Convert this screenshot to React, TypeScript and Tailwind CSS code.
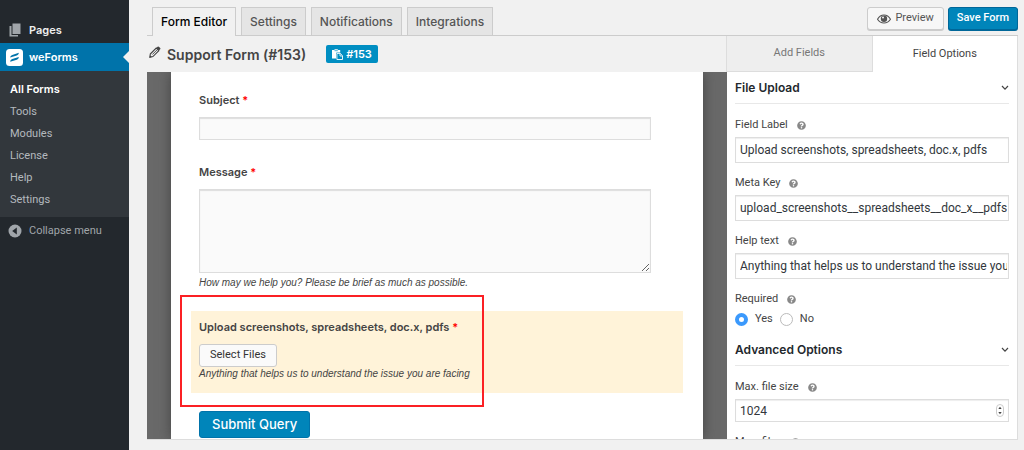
import { ReactNode, useState } from "react";
import { FaQuestionCircle } from "react-icons/fa";

const submenu = ["All Forms", "Tools", "Modules", "License", "Help", "Settings"];
const tabs = ["Form Editor", "Settings", "Notifications", "Integrations"];

function PagesIcon() {
    return (
        <svg viewBox="0 0 12 14" className="h-[14px] w-3 fill-[#a0a5aa]">
            <path d="M3.5 0.5H11.5V11H3.5z" />
            <path d="M0.5 3H2.5V12H9V13.5H0.5z" />
        </svg>
    )
}

function LogoIcon() {
    return (
        <svg viewBox="0 0 17 17" className="size-[17px]">
            <rect width="17" height="17" rx="3.5" fill="#fff" />
            <path d="M4.2 8.600C4.300 7.200 5 6.300 6.300 5.900L12.800 3.800C12.700 5.200 12 6.100 10.800 6.500zM4.200 12.800C4.300 11.400 5 10.500 6.300 10.100L12.800 8C12.700 9.400 12 10.300 10.800 10.700z" fill="#0073aa" />
        </svg>
    )
}

function CollapseIcon() {
    return (
        <svg viewBox="0 0 14 14" className="size-[14px]">
            <circle cx="7" cy="7" r="6.500" fill="#a0a5aa" />
            <path d="M8.800 3.600V10.400L4.200 7z" fill="#23282d" />
        </svg>
    )
}

function PencilIcon() {
    return (
        <svg viewBox="0 0 12 12" className="mb-1 size-3" fill="none" stroke="#444">
            <path d="M1.300 8L7.200 2.100L9.800 4.700L3.900 10.600L0.900 11.200z" strokeWidth="1.100" />
            <path d="M3.400 8.500L8 3.900" strokeWidth="0.900" />
            <path d="M0.500 11.600L1 9.200L2.800 11z" fill="#444" stroke="none" />
            <path d="M7.300 2L8.600 0.700Q9.200 0.200 9.800 0.700L11.200 2.100Q11.800 2.700 11.200 3.300L9.900 4.600z" fill="#444" stroke="none" />
        </svg>
    )
}

function PasteIcon() {
    return (
        <svg viewBox="0 0 11 11" className="size-[11px]">
            <path d="M0 1H2.500V0.300H5.800V1H8.200V3.500H5Q4 3.500 4 4.500V9.500H0z" fill="#fff" />
            <path d="M2.500 1.700H5.800" stroke="#008ec2" strokeWidth="0.700" />
            <path d="M4.900 4.400H8.200L10.500 6.700V10.500H4.900z" fill="none" stroke="#fff" strokeWidth="0.900" />
            <path d="M8 4.400V7H10.500" fill="none" stroke="#fff" strokeWidth="0.800" />
        </svg>
    )
}

function EyeIcon() {
    return (
        <svg viewBox="0 0 14 10" className="h-[10px] w-[14px]">
            <path d="M0.500 5.200Q3 1 7 1T13.500 5.200Q11 9 7 9T0.500 5.200z" fill="none" stroke="#555" strokeWidth="1.100" />
            <circle cx="7" cy="4.700" r="3.200" fill="#555" />
            <circle cx="6" cy="3.600" r="1" fill="#f7f7f7" />
        </svg>
    )
}

function ChevronIcon() {
    return (
        <svg viewBox="0 0 8 6" className="h-[6px] w-2" fill="none" stroke="#444" strokeWidth="1.200">
            <path d="M1 1L4 4.200L7 1" />
        </svg>
    )
}

function Sidebar() {
    return (
        <nav className="flex w-[129px] shrink-0 flex-col bg-[#23282d] pt-[17px] text-[#b4b9be]">
            <a href="#pages" className="flex h-[26px] items-center font-['Inter'] text-[11px] font-semibold text-[#eee]">
                <span className="flex w-[29px] justify-center">
                    <PagesIcon />
                </span>
                Pages
            </a>
            <a href="#weforms" className="relative flex h-7 items-center bg-[#0073aa] font-['Inter'] text-[11px] font-semibold text-white">
                <span className="flex w-[29px] justify-center">
                    <LogoIcon />
                </span>
                weForms
                <span className="absolute right-0 top-2 border-y-6 border-r-6 border-y-transparent border-r-[#f1f1f1]" />
            </a>
            <ul className="bg-[#32373c] pt-[6px] pb-[6px] pl-[10px] text-[11px]">
                {submenu.map((item, index) => (
                    <li key={item}>
                        <a href={"#" + item} className={index === 0 ? "flex h-6 items-center font-['Inter'] font-semibold text-white" : "flex h-[22px] items-center"}>
                            {item}
                        </a>
                    </li>
                ))}
            </ul>
            <button className="flex h-7 items-center text-[11px] text-[#a0a5aa]">
                <span className="flex w-[29px] justify-center">
                    <CollapseIcon />
                </span>
                Collapse menu
            </button>
        </nav>
    )
}

function TopBar() {
    return (
        <header className="flex items-end border-b border-[#ccc] pl-[5px]">
            <div className="flex gap-[5px] font-['Inter']">
                {tabs.map((tab, index) => (
                    <button
                        key={tab}
                        className={index === 0
                            ? "-mb-px h-[29px] border border-b-0 border-[#ccc] bg-[#f1f1f1] px-2 text-[12px] font-medium text-black"
                            : "h-7 border border-b-0 border-[#ccc] bg-[#e5e5e5] px-2 text-[12px] font-medium text-[#555]"}
                    >
                        {tab}
                    </button>
                ))}
            </div>
            <div className="mb-[5px] ml-auto flex gap-1">
                <button className="flex h-[23px] items-center gap-1 rounded-[3px] border border-[#ccc] bg-[#f7f7f7] px-[9px] text-[11px] text-[#555] shadow-[0_1px_0_#ccc]">
                    <EyeIcon />
                    Preview
                </button>
                <button className="h-[23px] rounded-[3px] border border-[#006799] bg-[#0085ba] px-2 text-[11px] font-medium text-white shadow-[0_1px_0_#006799]">
                    Save Form
                </button>
            </div>
        </header>
    )
}

function Required() {
    return <span className="text-[#f00]"> *</span>
}

function FormPreview() {
    return (
        <section className="flex min-w-0 flex-1 flex-col font-['Inter']">
            <div className="flex h-9 shrink-0 items-center border-r border-[#ddd] pl-[2px]">
                <PencilIcon />
                <h1 className="ml-[6px] text-[14px] font-semibold text-[#444]">Support Form (#153)</h1>
                <button className="ml-5 flex h-[18px] items-center gap-[3px] rounded-[2px] bg-[#008ec2] px-[6px] text-[11px] font-semibold text-white">
                    <PasteIcon />
                    #153
                </button>
            </div>
            <div className="flex min-h-0 flex-1 overflow-hidden bg-[#696969] px-6">
                <form className="flex flex-1 flex-col gap-1 bg-white px-5 pt-3 text-[#444] shadow-[0_0_12px_#444]">
                    <div className="px-2 pt-2 pb-3">
                        <label htmlFor="subject" className="block text-[11px] leading-[17px] font-semibold">Subject<Required /></label>
                        <input id="subject" type="text" className="mt-2 block h-[23px] w-[95%] border border-[#ddd] bg-[#fafafa] px-1 text-[11px] shadow-[inset_0_1px_1px_#ddd]" />
                    </div>
                    <div className="px-2 pt-2 pb-3">
                        <label htmlFor="message" className="block text-[11px] leading-[17px] font-semibold">Message<Required /></label>
                        <textarea id="message" className="mt-2 block h-[84px] w-[95%] border border-[#ddd] bg-[#fafafa] px-1 text-[11px] shadow-[inset_0_1px_1px_#ddd]" />
                        <p className="mt-[3px] font-['Liberation_Sans'] text-[10px] leading-[14px] text-[#444] italic">How may we help you? Please be brief as much as possible.</p>
                    </div>
                    <div className="relative mt-[5px] bg-[#fff3d9] px-2 pt-2 pb-3">
                        <label htmlFor="files" className="block text-[11px] leading-[17px] font-semibold">Upload screenshots, spreadsheets, doc.x, pdfs<Required /></label>
                        <button id="files" type="button" className="mt-2 block h-[23px] rounded-[3px] border border-[#ccc] bg-[#fafafa] px-[10px] font-['Roboto'] text-[11px] text-[#333]">
                            Select Files
                        </button>
                        <p className="font-['Liberation_Sans'] text-[10px] leading-[14px] text-[#444] italic">Anything that helps us to understand the issue you are facing</p>
                        <div className="absolute -top-4 -left-[11px] h-28 w-[304px] border-2 border-[#fb2024]" />
                    </div>
                    <div className="mt-[14px] px-2">
                        <button type="submit" className="h-[27px] rounded-[3px] border border-[#0073aa] bg-[#0085ba] px-3 text-[13px] font-medium text-white">
                            Submit Query
                        </button>
                    </div>
                </form>
            </div>
        </section>
    )
}

function SectionTitle({ children }: { children: ReactNode }) {
    return (
        <button className="flex h-8 w-full items-center justify-between border-b border-[#e8e8e8] text-left">
            <h2 className="font-['Inter'] text-[12px] font-semibold text-[#23282d]">{children}</h2>
            <ChevronIcon />
        </button>
    )
}

function FieldLabel({ htmlFor, children }: { htmlFor: string; children: ReactNode }) {
    return (
        <label htmlFor={htmlFor} className="mb-1 flex h-4 items-center gap-[9px] text-[11px] text-[#444]">
            {children}
            <FaQuestionCircle className="size-[9px] text-[#888]" />
        </label>
    )
}

function TextField({ id, label, value }: { id: string; label: string; value: string }) {
    return (
        <div>
            <FieldLabel htmlFor={id}>{label}</FieldLabel>
            <input id={id} type="text" defaultValue={value} className="block h-[26px] w-full border border-[#ddd] bg-white pr-px pl-1 text-[12px] text-[#32373c] shadow-[inset_0_1px_1px_#eee]" />
        </div>
    )
}

function FieldOptions() {
    const [required, setRequired] = useState("Yes")

    return (
        <aside className="flex w-[290px] shrink-0 flex-col overflow-hidden bg-white">
            <div className="flex h-9 shrink-0 text-[11px] text-[#444]">
                <button className="flex-1 border-r border-b border-[#ddd] bg-[#eee] text-[#777]">Add Fields</button>
                <button className="flex-1">Field Options</button>
            </div>
            <div className="min-h-0 flex-1 overflow-hidden px-2">
                <SectionTitle>File Upload</SectionTitle>
                <div className="flex flex-col gap-3 pt-[13px] pb-[7px]">
                    <TextField id="label" label="Field Label" value="Upload screenshots, spreadsheets, doc.x, pdfs" />
                    <TextField id="meta" label="Meta Key" value="upload_screenshots__spreadsheets__doc_x__pdfs" />
                    <TextField id="help" label="Help text" value="Anything that helps us to understand the issue you are facing" />
                    <div>
                        <FieldLabel htmlFor="Yes">Required</FieldLabel>
                        <div className="flex h-4 items-center gap-[7px] text-[11px] text-[#444]">
                            {["Yes", "No"].map(option => (
                                <label key={option} className="flex items-center gap-[7px]">
                                    <input
                                        id={option}
                                        type="radio"
                                        name="required"
                                        checked={required === option}
                                        onChange={() => setRequired(option)}
                                        className="size-[13px] appearance-none rounded-full border border-[#bbb] bg-white checked:border-4 checked:border-[#3b99fc]"
                                    />
                                    {option}
                                </label>
                            ))}
                        </div>
                    </div>
                </div>
                <SectionTitle>Advanced Options</SectionTitle>
                <div className="flex flex-col gap-3 pt-[13px]">
                    <div>
                        <FieldLabel htmlFor="size">Max. file size</FieldLabel>
                        <div className="relative">
                            <input id="size" type="number" defaultValue={1024} className="block h-[23px] w-full border border-[#ddd] bg-white px-1 text-[12px] text-[#32373c] shadow-[inset_0_1px_1px_#eee] [appearance:textfield]" />
                            <svg viewBox="0 0 8 13" className="absolute top-[5px] right-[5px] h-[13px] w-2">
                                <rect x="0.500" y="0.500" width="7" height="12" rx="3.500" fill="#fff" stroke="#ccc" />
                                <path d="M2.300 5L4 2.800L5.700 5zM2.300 8L4 10.200L5.700 8z" fill="#444" />
                            </svg>
                        </div>
                    </div>
                    <TextField id="count" label="Max. files" value="1" />
                </div>
            </div>
        </aside>
    )
}

export default function App() {
    return (
        <div className="flex h-screen bg-[#f1f1f1] font-['Roboto','Liberation_Sans',sans-serif]">
            <Sidebar />
            <main className="flex min-w-0 flex-1 flex-col pt-[7px] pr-[6px] pb-[10px] pl-[18px]">
                <TopBar />
                <div className="flex min-h-0 flex-1 border-r border-b border-[#ddd]">
                    <FormPreview />
                    <FieldOptions />
                </div>
            </main>
        </div>
    )
}
